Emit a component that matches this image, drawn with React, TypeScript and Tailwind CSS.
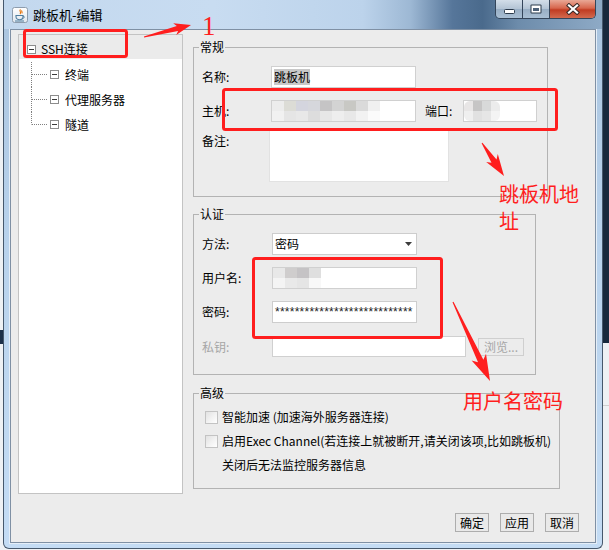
import React from "react";

type Pt = [number, number];

function arrowPoints(
  x1: number, y1: number, x2: number, y2: number,
  tail: number, shaft: number, head: number, headL: number
): string {
  const dx = x2 - x1, dy = y2 - y1;
  const len = Math.hypot(dx, dy);
  const ux = dx / len, uy = dy / len;
  const nx = -uy, ny = ux;
  const bx = x2 - ux * headL, by = y2 - uy * headL;
  const wx = x2 - ux * headL * 1.2, wy = y2 - uy * headL * 1.2;
  const pts: Pt[] = [
    [x1 + (nx * tail) / 2, y1 + (ny * tail) / 2],
    [bx + (nx * shaft) / 2, by + (ny * shaft) / 2],
    [wx + (nx * head) / 2, wy + (ny * head) / 2],
    [x2, y2],
    [wx - (nx * head) / 2, wy - (ny * head) / 2],
    [bx - (nx * shaft) / 2, by - (ny * shaft) / 2],
    [x1 - (nx * tail) / 2, y1 - (ny * tail) / 2],
  ];
  return pts.map((p) => p.map((v) => v.toFixed(1)).join(",")).join(" ");
}

function MinusBox() {
  return (
    <svg width="9" height="9" viewBox="0 0 9 9" className="shrink-0 block">
      <rect x="0.5" y="0.5" width="8" height="8" fill="#ffffff" stroke="#8c8c8c" />
      <line x1="2" y1="4.5" x2="7" y2="4.5" stroke="#3a3a3a" />
    </svg>
  );
}

function Connector({ last }: { last?: boolean }) {
  return (
    <svg width="17" height="25" viewBox="0 0 17 25" className="shrink-0 block">
      <line x1="0.5" y1="0" x2="0.5" y2={last ? 12.5 : 25} stroke="#808080" strokeDasharray="1 1" />
      <line x1="1" y1="12.5" x2="17" y2="12.5" stroke="#808080" strokeDasharray="1 1" />
    </svg>
  );
}

function Mosaic({ rows, cell }: { rows: string[][]; cell: string }) {
  return (
    <div className="flex flex-col">
      {rows.map((r, i) => (
        <div key={i} className="flex">
          {r.map((c, j) => (
            <div key={j} className={`${cell} ${c}`} />
          ))}
        </div>
      ))}
    </div>
  );
}

function Checkbox() {
  return (
    <div className="w-[13px] h-[13px] shrink-0 border border-[#c3c3c3] bg-[linear-gradient(135deg,#e2e2e2_0%,#f4f4f4_60%,#ffffff_100%)]" />
  );
}

function JavaIcon() {
  return (
    <svg width="16" height="16" viewBox="0 0 16 16" className="block">
      <defs>
        <linearGradient id="jg" x1="0" y1="0" x2="0" y2="1">
          <stop offset="0" stopColor="#ffffff" />
          <stop offset="1" stopColor="#dfe6ee" />
        </linearGradient>
      </defs>
      <rect x="0.5" y="0.5" width="15" height="15" rx="2" fill="url(#jg)" stroke="#8d9cad" />
      <path d="M8.5 2.5c-2 1.5 1.5 2.5-.5 4.5M10 3.5c-1 1 .8 1.5-.2 2.8" stroke="#e76f00" strokeWidth="1.1" fill="none" />
      <path d="M4 8.5h7v1.2c0 1.8-1.6 3-3.5 3S4 11.5 4 9.7z" fill="none" stroke="#4f7ea0" strokeWidth="1.1" />
      <path d="M11 9.3c1.6-.3 1.8 1.6.2 1.9" fill="none" stroke="#4f7ea0" strokeWidth="1" />
      <path d="M3 14h9" stroke="#4f7ea0" strokeWidth="1" />
    </svg>
  );
}

const hostRows = [
  ["bg-[#ececec]", "bg-[#dcdcd6]", "bg-[#d4d5de]", "bg-[#d6d7dc]", "bg-[#c5c4c5]", "bg-[#d3d3d3]", "bg-[#c8c8c4]", "bg-[#dadada]", "bg-[#f0f0f0]"],
  ["bg-[#f1f1f1]", "bg-[#e5e5e5]", "bg-[#e8e8e8]", "bg-[#dddddd]", "bg-[#e7e7e7]", "bg-[#eeeeee]", "bg-[#e8e8e8]", "bg-[#f2f2f2]", "bg-[#fbfbfb]"],
];
const portRows = [
  ["bg-[#e8e6e6]", "bg-[#c6c5c5]", "bg-[#d8d9d9]", "bg-[#ececec]"],
  ["bg-[#efefef]", "bg-[#e1e1e1]", "bg-[#e6e6e6]", "bg-[#f4f4f4]"],
];
const userRows = [
  ["bg-[#e8e8e8]", "bg-[#cfcdcd]", "bg-[#c5c3c5]", "bg-[#dfdfdf]"],
  ["bg-[#f4f4f4]", "bg-[#e9e9e9]", "bg-[#e5e5e5]", "bg-[#f8f8f8]"],
];

export default function App() {
  const red = "#ff1e1e";
  return (
    <div className="relative w-[609px] h-[550px] overflow-hidden bg-[#eef1f4] font-[family-name:'Noto_Sans_CJK_SC',sans-serif] text-black">
      {/* desktop behind */}
      <div className="absolute left-[596px] top-0 w-[13px] h-[343px] bg-[#18293d]" />
      <div className="absolute left-[596px] top-[405px] w-[13px] h-[1px] bg-[#cfcfcf]" />
      <div className="absolute left-0 top-[330px] w-[4px] h-[14px] bg-[#1c3048]" />

      {/* window */}
      <div className="absolute left-[3px] top-0 w-[600px] h-[549px] flex flex-col border-x border-b border-[#46586c] rounded-b-[6px] bg-[linear-gradient(to_bottom,#aac4de_0%,#b8d2ec_45%,#c4dcf4_100%)]">
        {/* title bar */}
        <div className="relative h-[29px] shrink-0 flex items-center pl-[8px] bg-[linear-gradient(to_right,#c3d8ee_0%,#c8dcf1_35%,#bcd3eb_60%,#9db8d4_68%,#56769a_75%,#4a6a8c_80%,#6d8cab_86%,#8eaac6_100%)]">
          <JavaIcon />
          <span className="ml-[5px] text-[13px] leading-[16px] text-black">跳板机-编辑</span>
          <div className="absolute left-[491px] top-0 h-[19px] flex border-x border-b border-[#34455a] rounded-b-[5px] overflow-hidden">
            <div className="w-[26px] h-full flex items-end justify-center pb-[4px] bg-[linear-gradient(to_bottom,#d3dee9_0%,#b2c3d4_50%,#98aec4_51%,#a9bfd4_100%)]">
              <svg width="11" height="5" viewBox="0 0 11 5" className="block">
                <rect x="0.5" y="0.5" width="10" height="4" rx="1" fill="#ffffff" stroke="#2b3a4b" />
              </svg>
            </div>
            <div className="w-[27px] h-full border-l border-[#34455a] flex items-center justify-center bg-[linear-gradient(to_bottom,#d3dee9_0%,#b2c3d4_50%,#98aec4_51%,#a9bfd4_100%)]">
              <svg width="12" height="10" viewBox="0 0 12 10" className="block">
                <rect x="0.5" y="0.5" width="11" height="9" rx="1" fill="#2b3a4b" />
                <rect x="1.5" y="1.5" width="9" height="7" fill="#ffffff" />
                <rect x="3" y="4" width="6" height="3" fill="#4d6178" />
              </svg>
            </div>
            <div className="w-[46px] h-full border-l border-[#34455a] flex items-center justify-center bg-[linear-gradient(to_bottom,#e9a896_0%,#d7664d_45%,#c13c22_55%,#d26a4f_100%)]">
              <svg width="14" height="12" viewBox="0 0 14 12" className="block">
                <path d="M3 2.5L11 9.5M11 2.5L3 9.5" stroke="#3a2a28" strokeWidth="4.2" strokeLinecap="square" />
                <path d="M3 2.5L11 9.5M11 2.5L3 9.5" stroke="#ffffff" strokeWidth="2.2" strokeLinecap="square" />
              </svg>
            </div>
          </div>
        </div>

        {/* client */}
        <div className="flex-1 mx-[6px] mb-[5px] border border-[#7f90a4] bg-[#ececec] flex flex-col shadow-[0_0_0_1px_#e4eef8]">
          <div className="flex pt-[4px] pl-[7px]">
            {/* tree */}
            <div className="w-[165px] h-[460px] shrink-0 border border-[#c3c3c3] bg-white">
              <div className="h-[24px] bg-[#ebebeb] flex items-center pt-[4px] pl-[8px]">
                <MinusBox />
                <span className="ml-[5px] text-[12px] leading-[14px]">SSH连接</span>
              </div>
              <div className="mt-[3px] pl-[12px]">
                {["终端", "代理服务器", "隧道"].map((t, i) => (
                  <div key={t} className="h-[25px] flex items-center">
                    <Connector last={i === 2} />
                    <span className="ml-[2px]">
                      <MinusBox />
                    </span>
                    <span className="ml-[6px] text-[12px] leading-[14px]">{t}</span>
                  </div>
                ))}
              </div>
            </div>

            {/* right column */}
            <div className="ml-[10px] pt-[6px] flex flex-col">
              <fieldset className="w-[355px] h-[157px] border border-[#b3b3b3]">
                <legend className="ml-[5px] px-[1px] text-[12px] leading-[14px]">常规</legend>
                <div className="pl-[8px] pt-[12px] text-[12px] leading-[14px]">
                  <div className="flex items-center h-[22px]">
                    <span className="w-[69px] shrink-0">名称:</span>
                    <div className="w-[145px] h-[22px] border border-[#d0d0d0] bg-white flex items-center pl-[2px]">
                      <span className="bg-[#c8c8c8] leading-[16px]">跳板机</span>
                    </div>
                  </div>
                  <div className="flex items-center h-[22px] mt-[12px]">
                    <span className="w-[69px] shrink-0">主机:</span>
                    <div className="w-[145px] h-[22px] border border-[#d0d0d0] bg-white flex items-center overflow-hidden">
                      <Mosaic rows={hostRows} cell="w-[12px] h-[10px]" />
                    </div>
                    <span className="ml-[9px] w-[38px] shrink-0">端口:</span>
                    <div className="w-[74px] h-[22px] border border-[#d0d0d0] bg-white flex items-center overflow-hidden">
                      <div className="rounded-[6px] overflow-hidden">
                        <Mosaic rows={portRows} cell="w-[9px] h-[10px]" />
                      </div>
                    </div>
                  </div>
                  <div className="flex items-start mt-[8px]">
                    <span className="w-[67px] shrink-0 pt-[4px]">备注:</span>
                    <div className="w-[180px] h-[52px] border border-[#e2e2e2] bg-white" />
                  </div>
                </div>
              </fieldset>

              <fieldset className="mt-[10px] w-[343px] h-[168px] border border-[#b3b3b3]">
                <legend className="ml-[5px] px-[1px] text-[12px] leading-[14px]">认证</legend>
                <div className="pl-[8px] pt-[12px] text-[12px] leading-[14px]">
                  <div className="flex items-center h-[22px]">
                    <span className="w-[70px] shrink-0">方法:</span>
                    <div className="w-[145px] h-[22px] border border-[#cdcdcd] bg-white flex items-center pl-[2px]">
                      <span>密码</span>
                      <svg width="7" height="4" viewBox="0 0 7 4" className="ml-auto mr-[4px] block">
                        <polygon points="0,0 7,0 3.5,4" fill="#3c3c3c" />
                      </svg>
                    </div>
                  </div>
                  <div className="flex items-center h-[22px] mt-[12px]">
                    <span className="w-[70px] shrink-0">用户名:</span>
                    <div className="w-[145px] h-[22px] border border-[#d0d0d0] bg-white flex items-center overflow-hidden">
                      <Mosaic rows={userRows} cell="w-[12px] h-[10px]" />
                    </div>
                  </div>
                  <div className="flex items-center h-[22px] mt-[12px]">
                    <span className="w-[70px] shrink-0">密码:</span>
                    <div className="w-[145px] h-[22px] border border-[#cdcdcd] bg-white flex items-center pl-[2px] overflow-hidden">
                      <span className="font-['Liberation_Sans',sans-serif] text-[12px] tracking-[0.25px] text-[#222]">
                        ****************************
                      </span>
                    </div>
                  </div>
                  <div className="flex items-center h-[21px] mt-[13px]">
                    <span className="w-[70px] shrink-0 text-[#a6a6a6]">私钥:</span>
                    <div className="w-[194px] h-[21px] border border-[#d0d0d0] bg-white" />
                    <div className="ml-[12px] w-[46px] h-[18px] border border-[#cfcfcf] bg-[#ececec] flex items-center justify-center text-[#a6a6a6]">
                      浏览...
                    </div>
                  </div>
                </div>
              </fieldset>

              <fieldset className="mt-[11px] w-[367px] h-[103px] border border-[#b3b3b3]">
                <legend className="ml-[5px] px-[1px] text-[12px] leading-[14px]">高级</legend>
                <div className="pt-[5px] text-[12px] leading-[14px]">
                  <div className="h-[24px] flex items-center pl-[11px]">
                    <Checkbox />
                    <span className="ml-[4px]">智能加速 (加速海外服务器连接)</span>
                  </div>
                  <div className="h-[24px] flex items-center pl-[11px]">
                    <Checkbox />
                    <span className="ml-[4px] whitespace-nowrap">启用Exec Channel(若连接上就被断开,请关闭该项,比如跳板机)</span>
                  </div>
                  <div className="h-[24px] flex items-center pl-[28px]">
                    <span>关闭后无法监控服务器信息</span>
                  </div>
                </div>
              </fieldset>
            </div>
          </div>

          {/* buttons */}
          <div className="mt-[19px] flex justify-end gap-[11px] pr-[16px] text-[12px] leading-[14px]">
            {["确定", "应用", "取消"].map((b) => (
              <div key={b} className="w-[34px] h-[19px] border border-[#adadad] bg-[#e9e9e9] flex items-center justify-center">
                {b}
              </div>
            ))}
          </div>
        </div>
      </div>

      {/* annotations */}
      <svg width="609" height="550" viewBox="0 0 609 550" className="absolute left-0 top-0 pointer-events-none">
        <rect x="24.5" y="30.5" width="102" height="26" rx="2" fill="none" stroke={red} strokeWidth="3" />
        <rect x="223.5" y="89.5" width="333" height="40" rx="2" fill="none" stroke={red} strokeWidth="3" />
        <rect x="253.5" y="258.5" width="188" height="79" rx="2" fill="none" stroke={red} strokeWidth="3" />
        <polygon points={arrowPoints(144, 37, 191, 25, 1, 5, 12, 14)} fill={red} />
        <polygon points={arrowPoints(482, 143, 504, 176, 1, 6, 14, 18)} fill={red} />
        <polygon points={arrowPoints(453, 302, 490, 381, 1, 6, 16, 22)} fill={red} />
      </svg>
      <div className="absolute left-[202px] top-[15px] font-['Liberation_Serif',serif] text-[27px] leading-[22px] text-[#ff1e1e]">
        1
      </div>
      <div className="absolute left-[499px] top-[180px] w-[92px] text-[20px] leading-[27px] text-[#ff1e1e]">
        跳板机地址
      </div>
      <div className="absolute left-[463px] top-[387px] text-[20px] leading-[27px] text-[#ff1e1e] whitespace-nowrap">
        用户名密码
      </div>
    </div>
  );
}
